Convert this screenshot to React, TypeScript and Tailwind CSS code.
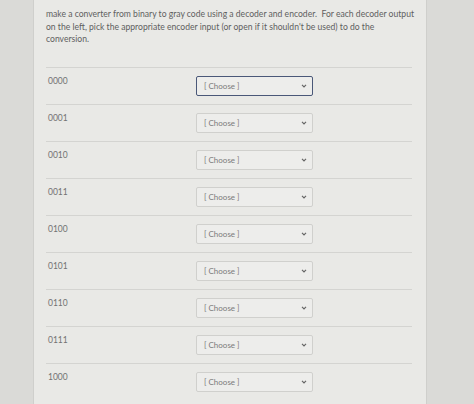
import React from "react";

const rows = ["0000", "0001", "0010", "0011", "0100", "0101", "0110", "0111", "1000"];

function Chevron() {
  return (
    <svg width="6" height="4" viewBox="0 0 6 4" className="shrink-0">
      <path d="M1 0.8l2 2 2-2" fill="none" stroke="#666" strokeWidth="1.2" />
    </svg>
  );
}

function Select({ focused }: { focused?: boolean }) {
  return (
    <div
      className={
        "flex h-[20px] w-[117px] items-center justify-between rounded-[2px] bg-[#ededeb] pl-[7px] pr-[5px] " +
        (focused ? "border-[1.5px] border-[#4a5878]" : "border border-[#d0d0cd]")
      }
    >
      <span className="text-[8px] text-[#7a7a7a]">[ Choose ]</span>
      <Chevron />
    </div>
  );
}

export default function App() {
  return (
    <div
      className="flex h-[404px] w-[474px] overflow-hidden bg-[#dadad7]"
      style={{ fontFamily: "Lato, 'Liberation Sans', sans-serif" }}
    >
      <div className="ml-[33px] w-[394px] border-x border-[#cfcfcc] bg-[#e9e9e6] px-[12px]">
        <p className="pt-[8px] text-[8.6px] leading-[12.5px] text-[#5e5e5e]">
          make a converter from binary to gray code using a decoder and encoder.&nbsp; For each decoder output
          on the left, pick the appropriate encoder input (or open if it shouldn't be used) to do the
          conversion.
        </p>
        <div className="mt-[21px] mr-[2px]">
          {rows.map((r, i) => (
            <div key={r} className="flex h-[37px] items-start border-t border-[#d4d4d1] pt-[8px]">
              <div className="-mt-[1px] w-[150px] pl-[2px] text-[8.5px] text-[#727272]">{r}</div>
              <Select focused={i === 0} />
            </div>
          ))}
        </div>
      </div>
    </div>
  );
}
